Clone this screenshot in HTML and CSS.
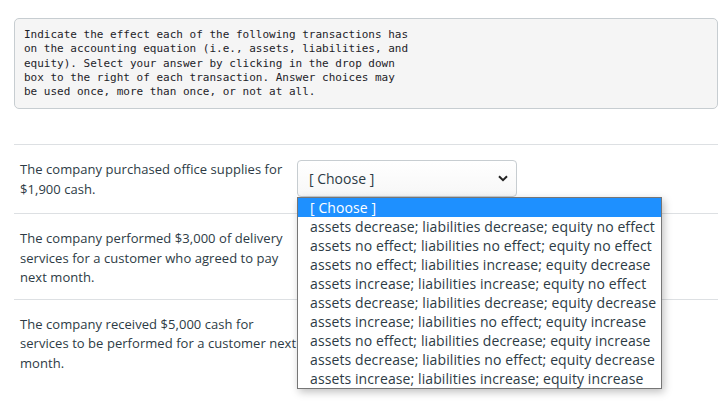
FILE: index.html
```html
<!DOCTYPE html>
<html>
<head>
<meta charset="utf-8">
<link rel="stylesheet" href="styles.css">
</head>
<body>
<div class="page">
  <pre class="instructions">Indicate the effect each of the following transactions has
on the accounting equation (i.e., assets, liabilities, and
equity). Select your answer by clicking in the drop down
box to the right of each transaction. Answer choices may
be used once, more than once, or not at all.</pre>

  <div class="rows">
    <div class="row">
      <div class="desc">The company purchased office supplies for $1,900 cash.</div>
      <div class="answer">
        <div class="select">
          <span class="select-text">[ Choose ]</span>
          <svg class="chevron" width="10" height="7" viewBox="0 0 10 7"><path d="M1 1.2 L5 5.2 L9 1.2" fill="none" stroke="#222" stroke-width="2"/></svg>
        </div>
        <ul class="listbox">
          <li class="opt selected">[ Choose ]</li>
          <li class="opt">assets decrease; liabilities decrease; equity no effect</li>
          <li class="opt">assets no effect; liabilities no effect; equity no effect</li>
          <li class="opt">assets no effect; liabilities increase; equity decrease</li>
          <li class="opt">assets increase; liabilities increase; equity no effect</li>
          <li class="opt">assets decrease; liabilities decrease; equity decrease</li>
          <li class="opt">assets increase; liabilities no effect; equity increase</li>
          <li class="opt">assets no effect; liabilities decrease; equity increase</li>
          <li class="opt">assets decrease; liabilities no effect; equity decrease</li>
          <li class="opt">assets increase; liabilities increase; equity increase</li>
        </ul>
      </div>
    </div>
    <div class="row">
      <div class="desc">The company performed $3,000 of delivery services for a customer who agreed to pay next month.</div>
      <div class="answer"></div>
    </div>
    <div class="row">
      <div class="desc">The company received $5,000 cash for services to be performed for a customer next month.</div>
      <div class="answer"></div>
    </div>
  </div>
</div>
</body>
</html>
```

FILE: styles.css
```css
html, body {
  margin: 0;
  padding: 0;
  background: #ffffff;
  min-height: 402px;
}

.page {
  min-height: 402px;
  box-sizing: border-box;
  padding: 18px 5px 0 14px;
  font-family: "Open Sans", "Liberation Sans", sans-serif;
  color: #2d3b45;
}

.instructions {
  margin: 0;
  width: 704px;
  box-sizing: border-box;
  background: #f5f5f5;
  border: 1px solid #c7cdd1;
  border-radius: 5px;
  padding: 9px 9px 9px 9px;
  font-family: "DejaVu Sans Mono", "Liberation Mono", monospace;
  font-size: 11px;
  line-height: 14.25px;
  color: #1d2329;
}

.rows {
  margin-top: 35px;
  width: 704px;
}

.row {
  display: flex;
  border-top: 1px solid #dde0e3;
  padding: 15px 0 11px 6px;
}

.row:first-child {
  padding-bottom: 14px;
}

.desc {
  width: 277px;
  font-size: 13px;
  line-height: 19.5px;
  letter-spacing: 0.05px;
}

.answer {
  position: relative;
}

.select {
  width: 220px;
  height: 37px;
  box-sizing: border-box;
  border: 1px solid #c7cdd1;
  border-radius: 4px;
  background: linear-gradient(#ffffff, #f7f7f7);
  display: flex;
  align-items: center;
  justify-content: space-between;
  padding: 0 8px 0 11px;
  font-size: 14px;
  color: #2d3b45;
}

.chevron {
  display: block;
}

.listbox {
  position: absolute;
  top: 37px;
  left: 0;
  width: 365px;
  box-sizing: border-box;
  margin: 0;
  padding: 0;
  list-style: none;
  background: #ffffff;
  border: 1px solid #767676;
  box-shadow: 2px 3px 8px rgba(0, 0, 0, 0.25);
  z-index: 5;
}

.opt {
  font-size: 14px;
  line-height: 19px;
  height: 19px;
  padding-left: 12px;
  white-space: nowrap;
  letter-spacing: 0.1px;
  color: #2d3b45;
}

.opt.selected {
  background: #1e90ff;
  color: #ffffff;
}
```
